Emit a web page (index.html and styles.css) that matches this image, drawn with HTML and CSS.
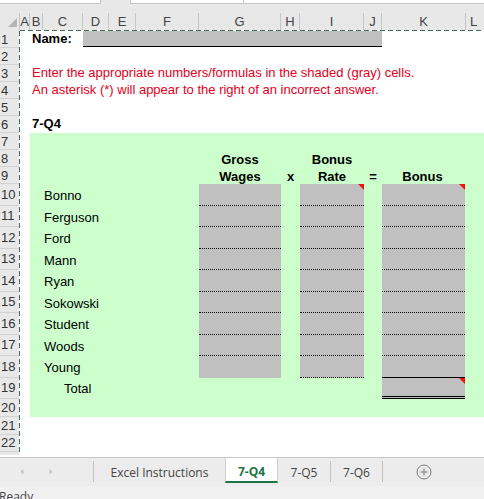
FILE: index.html
```html
<!DOCTYPE html>
<html>
<head>
<meta charset="utf-8">
<title>7-Q4</title>
<link rel="stylesheet" href="styles.css">
</head>
<body>
<div class="app">
  <div class="fbar">
    <div class="fbox namebox"></div>
    <div class="fgap"></div>
    <div class="fbox formula"><span class="fspace"></span><span class="fdiv"></span></div>
  </div>

  <div class="colhdr">
    <div class="corner">
      <svg width="10" height="10" viewBox="0 0 10 10"><polygon points="9,0 9,9 0,9" fill="#b4b4b4"/></svg>
    </div>
    <div class="letters">
      <div class="ch wA">A</div>
      <div class="ch wB">B</div>
      <div class="ch wC">C</div>
      <div class="ch wD">D</div>
      <div class="ch wE">E</div>
      <div class="ch wF">F</div>
      <div class="ch wG">G</div>
      <div class="ch wH">H</div>
      <div class="ch wI">I</div>
      <div class="ch wJ">J</div>
      <div class="ch wK">K</div>
      <div class="ch wL">L</div>
    </div>
  </div>

  <div class="sheet">
    <div class="rowhdr">
      <div class="rh s">1</div>
      <div class="rh s">2</div>
      <div class="rh s">3</div>
      <div class="rh s">4</div>
      <div class="rh s">5</div>
      <div class="rh s">6</div>
      <div class="rh s">7</div>
      <div class="rh s">8</div>
      <div class="rh s">9</div>
      <div class="rh t">10</div>
      <div class="rh t">11</div>
      <div class="rh t">12</div>
      <div class="rh t">13</div>
      <div class="rh t">14</div>
      <div class="rh t">15</div>
      <div class="rh t">16</div>
      <div class="rh t">17</div>
      <div class="rh t">18</div>
      <div class="rh t">19</div>
      <div class="rh u0">20</div>
      <div class="rh u">21</div>
      <div class="rh u">22</div>
      <div class="rh u">23</div>
    </div>

    <div class="grid">
      <div class="green"></div>

      <div class="txt name-label">Name:</div>
      <div class="name-field"></div>

      <div class="txt note n3">Enter the appropriate numbers/formulas in the shaded (gray) cells.</div>
      <div class="txt note n4">An asterisk (*) will appear to the right of an incorrect answer.</div>

      <div class="txt title">7-Q4</div>

      <div class="hd h-gross">Gross</div>
      <div class="hd h-wages">Wages</div>
      <div class="hd h-x">x</div>
      <div class="hd h-bonus1">Bonus</div>
      <div class="hd h-rate">Rate</div>
      <div class="hd h-eq">=</div>
      <div class="hd h-bonus">Bonus</div>

      <div class="names">
        <div class="nm">Bonno</div>
        <div class="nm">Ferguson</div>
        <div class="nm">Ford</div>
        <div class="nm">Mann</div>
        <div class="nm">Ryan</div>
        <div class="nm">Sokowski</div>
        <div class="nm">Student</div>
        <div class="nm">Woods</div>
        <div class="nm">Young</div>
        <div class="nm total">Total</div>
      </div>

      <div class="incol col-g">
        <div class="cell"></div>
        <div class="cell"></div>
        <div class="cell"></div>
        <div class="cell"></div>
        <div class="cell"></div>
        <div class="cell"></div>
        <div class="cell"></div>
        <div class="cell"></div>
        <div class="cell plain"></div>
      </div>

      <div class="incol col-i">
        <div class="cell"><span class="tri"></span></div>
        <div class="cell"></div>
        <div class="cell"></div>
        <div class="cell"></div>
        <div class="cell"></div>
        <div class="cell"></div>
        <div class="cell"></div>
        <div class="cell"></div>
        <div class="cell"></div>
      </div>

      <div class="incol col-k">
        <div class="cell"><span class="tri"></span></div>
        <div class="cell"></div>
        <div class="cell"></div>
        <div class="cell"></div>
        <div class="cell"></div>
        <div class="cell"></div>
        <div class="cell"></div>
        <div class="cell"></div>
        <div class="cell solid"></div>
        <div class="cell dbl"><span class="tri"></span></div>
      </div>
    </div>
  </div>

  <div class="gap"></div>

  <div class="tabs">
    <div class="nav">
      <svg width="93" height="28" viewBox="0 0 93 28">
        <polygon points="23.5,11 23.5,16.5 20.5,13.75" fill="#c2c2c2"/>
        <polygon points="49.5,11 49.5,16.5 52.5,13.75" fill="#c2c2c2"/>
      </svg>
    </div>
    <div class="sep"></div>
    <div class="tab t-instr">Excel Instructions</div>
    <div class="tab active">7-Q4</div>
    <div class="tab t-q5">7-Q5</div>
    <div class="sep"></div>
    <div class="tab t-q6">7-Q6</div>
    <div class="sep"></div>
    <div class="plus">
      <svg width="16" height="16" viewBox="0 0 16 16">
        <circle cx="8" cy="8" r="7" fill="none" stroke="#808080" stroke-width="1"/>
        <line x1="4.5" y1="8" x2="11.5" y2="8" stroke="#808080" stroke-width="1.2"/>
        <line x1="8" y1="4.5" x2="8" y2="11.5" stroke="#808080" stroke-width="1.2"/>
      </svg>
    </div>
  </div>

  <div class="status">Ready</div>
</div>
</body>
</html>
```

FILE: styles.css
```css
* {
  box-sizing: border-box;
  margin: 0;
  padding: 0;
}

html, body {
  width: 484px;
  height: 499px;
  overflow: hidden;
  background: #ffffff;
}

body {
  font-family: "Liberation Sans", Arial, sans-serif;
  font-size: 13px;
  color: #000000;
}

.app {
  width: 484px;
  height: 499px;
  display: flex;
  flex-direction: column;
}

/* formula bar remnant */
.fbar {
  height: 4px;
  display: flex;
  background: #e8e8e8;
  flex-shrink: 0;
}

.fbox {
  height: 4px;
  background: #ffffff;
  border-bottom: 1px solid #c6c6c6;
}

.namebox {
  width: 101px;
  border-right: 1px solid #c6c6c6;
}

.fgap {
  width: 29px;
}

.formula {
  flex: 1;
  display: flex;
  border-left: 1px solid #c6c6c6;
}

.fspace {
  width: 112px;
}

.fdiv {
  width: 1px;
  height: 3px;
  background: #c6c6c6;
}

/* column header */
.colhdr {
  height: 27px;
  padding-top: 9px;
  display: flex;
  background: #e8e8e8;
  flex-shrink: 0;
}

.corner {
  width: 20px;
  height: 18px;
  border-right: 1px solid #c6c6c6;
  display: flex;
  align-items: flex-end;
  justify-content: flex-end;
  padding: 0 1px 3px 0;
}

.letters {
  flex: 1;
  height: 18px;
  display: flex;
  padding-bottom: 1px;
  background:
    repeating-linear-gradient(90deg, #3f6f58 0 5px, #ffffff 5px 8px) left bottom / 100% 1px no-repeat,
    #e8e8e8;
}

.ch {
  height: 17px;
  border-right: 1px solid #c6c6c6;
  text-align: center;
  line-height: 17px;
  color: #444444;
  flex-shrink: 0;
}

.wA { width: 10px; }
.wB { width: 13px; }
.wC { width: 40px; }
.wD { width: 26px; }
.wE { width: 27px; }
.wF { width: 63px; }
.wG { width: 82px; }
.wH { width: 19px; }
.wI { width: 64px; }
.wJ { width: 18px; }
.wK { width: 84px; }
.wL { flex: 1; border-right: none; text-align: left; padding-left: 4px; }

/* sheet */
.sheet {
  height: 424px;
  display: flex;
  overflow: hidden;
  flex-shrink: 0;
}

.rowhdr {
  width: 20px;
  flex-shrink: 0;
  padding-right: 1px;
  display: flex;
  flex-direction: column;
  background:
    repeating-linear-gradient(180deg, #3f6f58 0 5px, #ffffff 5px 8px) right top / 1px 100% no-repeat,
    #e8e8e8;
}

.rh {
  flex-shrink: 0;
  display: flex;
  align-items: center;
  padding-left: 1px;
  border-bottom: 1px solid #d2d2d2;
  color: #333333;
  line-height: 15px;
}

.rh.s { height: 17px; }
.rh.t { height: 21.5px; }
.rh.u0 { height: 18px; }
.rh.u { height: 17.5px; }

.grid {
  flex: 1;
  display: grid;
  grid-template-columns: 10px 13px 40px 26px 27px 63px 82px 19px 64px 18px 84px 1fr;
  grid-template-rows: repeat(9, 17px) repeat(10, 21.5px) 18px repeat(4, 17.5px);
}

.green {
  grid-column: 2 / -1;
  grid-row: 7 / 21;
  background: #ccffcc;
}

.txt {
  display: flex;
  align-items: center;
  line-height: 15px;
  white-space: nowrap;
  padding-left: 2px;
  padding-bottom: 2px;
}

.name-label {
  grid-column: 2 / 4;
  grid-row: 1;
  font-weight: bold;
}

.name-field {
  grid-column: 4 / 11;
  grid-row: 1;
  height: 16px;
  background: #c0c0c0;
  border-bottom: 1px solid #000000;
}

.note {
  grid-column: 2 / -1;
  color: #e3001b;
}

.n3 { grid-row: 3; }
.n4 { grid-row: 4; }

.title {
  grid-column: 2 / -1;
  grid-row: 6;
  font-weight: bold;
}

.hd {
  display: flex;
  justify-content: center;
  align-items: center;
  font-weight: bold;
  line-height: 15px;
  padding-top: 2px;
  white-space: nowrap;
}

.h-gross { grid-column: 7; grid-row: 8; }
.h-wages { grid-column: 7; grid-row: 9; }
.h-x { grid-column: 8; grid-row: 9; }
.h-bonus1 { grid-column: 9; grid-row: 8; }
.h-rate { grid-column: 9; grid-row: 9; }
.h-eq { grid-column: 10; grid-row: 9; }
.h-bonus { grid-column: 11; grid-row: 9; padding-right: 3px; }

.names {
  grid-column: 3 / 7;
  grid-row: 10 / 20;
  display: flex;
  flex-direction: column;
}

.nm {
  height: 21.5px;
  flex-shrink: 0;
  display: flex;
  align-items: center;
  line-height: 15px;
  padding-left: 1px;
  padding-top: 2px;
  white-space: nowrap;
}

.nm.total {
  padding-left: 21px;
  padding-top: 0;
}

.incol {
  display: flex;
  flex-direction: column;
}

.col-g { grid-column: 7; grid-row: 10 / 19; }
.col-i { grid-column: 9; grid-row: 10 / 19; }
.col-k { grid-column: 11; grid-row: 10 / 20; margin-right: 1px; }

.cell {
  height: 21.5px;
  flex-shrink: 0;
  position: relative;
  background: #c0c0c0;
  border-bottom: 1px dotted #000000;
}

.cell.plain { border-bottom: none; }
.cell.solid { border-bottom: 1px solid #000000; }
.cell.dbl { border-bottom: 3px double #000000; }

.tri {
  position: absolute;
  top: 0;
  right: 0;
  width: 0;
  height: 0;
  border-top: 6px solid #ee1111;
  border-left: 6px solid transparent;
}

/* tab bar */
.gap {
  height: 2px;
  background: #ffffff;
  flex-shrink: 0;
}

.tabs {
  height: 29px;
  flex-shrink: 0;
  display: flex;
  align-items: flex-start;
  border-top: 1px solid #c6c6c6;
  background: #ececec;
  font-family: "Open Sans", "Noto Sans", sans-serif;
  font-size: 12px;
  color: #444444;
}

.nav {
  width: 93px;
  height: 28px;
  flex-shrink: 0;
}

.sep {
  width: 1px;
  height: 21px;
  margin-top: 3px;
  background: #c2c2c2;
  flex-shrink: 0;
}

.tab {
  height: 28px;
  display: flex;
  align-items: center;
  justify-content: center;
  flex-shrink: 0;
  white-space: nowrap;
}

.t-instr { width: 131px; }

.active {
  width: 53px;
  height: 25px;
  padding-top: 3px;
  background: #ffffff;
  border-left: 1px solid #d0d0d0;
  border-right: 1px solid #d0d0d0;
  border-bottom: 2px solid #217346;
  color: #217346;
  font-weight: bold;
}

.t-q5 { width: 52px; }
.t-q6 { width: 51px; }

.plus {
  height: 28px;
  margin-left: 33px;
  display: flex;
  align-items: center;
}

.plus svg {
  display: block;
}

/* status bar */
.status {
  flex: 1;
  background: #f0f0f0;
  font-family: "Open Sans", "Noto Sans", sans-serif;
  font-size: 12px;
  line-height: 16px;
  color: #444444;
  padding-top: 3px;
  margin-left: -1px;
  white-space: nowrap;
}
```
